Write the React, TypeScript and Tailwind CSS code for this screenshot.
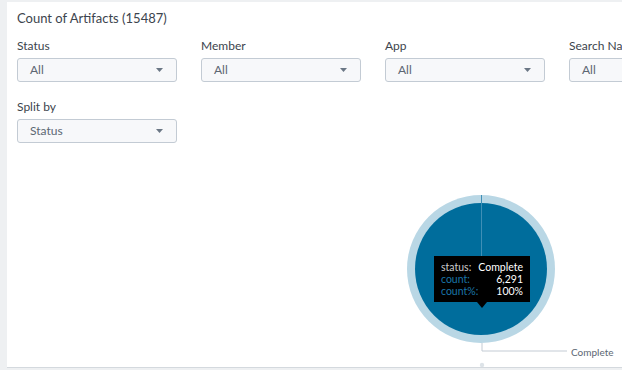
const FONT = { fontFamily: "Lato, 'Open Sans', Arial, sans-serif" };

function Caret() {
  return (
    <svg width="7" height="4" viewBox="0 0 7 4" className="shrink-0">
      <path d="M0 0 L7 0 L3.5 4 Z" fill="#6b7785" />
    </svg>
  );
}

function Dropdown({ label, value }: { label: string; value: string }) {
  return (
    <div className="flex w-[160px] shrink-0 flex-col gap-[5px]">
      <span className="whitespace-nowrap text-[12px] leading-[14px] text-[#3c444d]">{label}</span>
      <div className="flex h-[24px] items-center justify-between rounded-[3px] border border-[#c3cbd4] bg-[#f7f8fa] pl-[12px] pr-[13px]">
        <span className="text-[12px] text-[#5c6773]">{value}</span>
        <Caret />
      </div>
    </div>
  );
}

function PieChart() {
  const cx = 474;
  const cy = 118;
  return (
    <div className="relative h-[216px] w-full">
      <svg width="615" height="216" viewBox="0 0 615 216" className="block">
        <circle cx={cx} cy={cy} r={74} fill="#b9d7e5" />
        <circle cx={cx} cy={cy} r={66} fill="#006d9c" />
        <line x1={cx + 0.5} y1={cy - 74} x2={cx + 0.5} y2={cy} stroke="#3f8fb6" strokeWidth="1" />
        <polyline
          points={`${cx + 1},${cy + 74} ${cx + 1},${cy + 82} 560,${cy + 82}`}
          fill="none"
          stroke="#c3cbd4"
          strokeWidth="1"
        />
        <circle cx={cx + 1} cy={214} r={2.2} fill="#dde3e8" />
      </svg>
      <span className="absolute left-[564px] top-[195px] text-[10px] leading-[12px] text-[#5c6773]">Complete</span>
      <div className="absolute left-[427px] top-[105px] w-[96px] bg-black px-[7px] py-[5px] text-[10.5px] leading-[12px]">
        <div className="flex justify-between">
          <span className="text-[#cccccc]">status:</span>
          <span className="text-white">Complete</span>
        </div>
        <div className="flex justify-between">
          <span className="text-[#1a75a8]">count:</span>
          <span className="text-white">6,291</span>
        </div>
        <div className="flex justify-between">
          <span className="text-[#1a75a8]">count%:</span>
          <span className="text-white">100%</span>
        </div>
        <div className="absolute left-1/2 top-full h-0 w-0 -translate-x-1/2 border-x-[5px] border-t-[6px] border-x-transparent border-t-black" />
      </div>
    </div>
  );
}

export default function App() {
  return (
    <div className="h-[370px] w-[622px] overflow-hidden bg-[#eef0f2] pl-[7px] pt-[2px]" style={FONT}>
      <div className="flex h-[366px] flex-col border-b border-[#d4d9de] bg-white">
        <div className="pl-[10px] pt-[8px] text-[13px] leading-[16px] text-[#3c444d]">Count of Artifacts (15487)</div>
        <div className="flex gap-[24px] pl-[10px] pt-[13px]">
          <Dropdown label="Status" value="All" />
          <Dropdown label="Member" value="All" />
          <Dropdown label="App" value="All" />
          <Dropdown label="Search Name" value="All" />
        </div>
        <div className="flex pl-[10px] pt-[18px]">
          <Dropdown label="Split by" value="Status" />
        </div>
        <div className="mt-auto">
          <PieChart />
        </div>
      </div>
    </div>
  );
}
